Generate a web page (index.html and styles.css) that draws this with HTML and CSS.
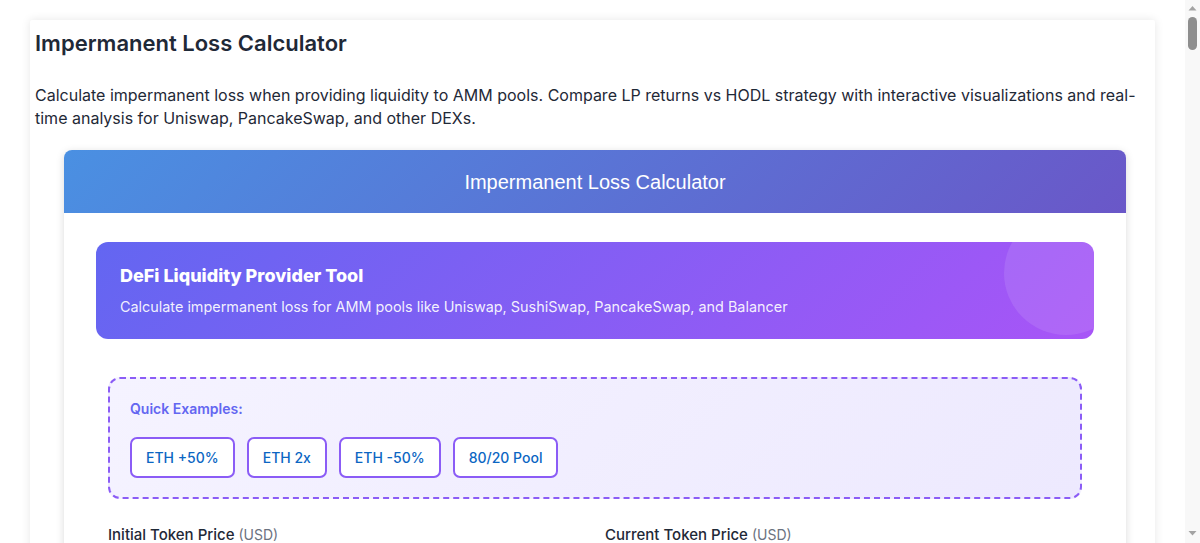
FILE: index.html
```html
<!DOCTYPE html>
<html lang="en">
<head>
<meta charset="utf-8">
<title>Impermanent Loss Calculator</title>
<link rel="stylesheet" href="styles.css">
</head>
<body>
<main class="page">
  <h1 class="page-title">Impermanent Loss Calculator</h1>
  <p class="page-intro">Calculate impermanent loss when providing liquidity to AMM pools. Compare LP returns vs HODL strategy with interactive visualizations and real-time analysis for Uniswap, PancakeSwap, and other DEXs.</p>

  <section class="calc">
    <header class="calc-head">Impermanent Loss Calculator</header>
    <div class="calc-body">
      <div class="banner">
        <h2 class="banner-title">DeFi Liquidity Provider Tool</h2>
        <p class="banner-sub">Calculate impermanent loss for AMM pools like Uniswap, SushiSwap, PancakeSwap, and Balancer</p>
      </div>

      <div class="form">
        <div class="examples">
          <div class="examples-title">Quick Examples:</div>
          <div class="examples-list">
            <button class="ex-btn">ETH +50%</button>
            <button class="ex-btn">ETH 2x</button>
            <button class="ex-btn">ETH -50%</button>
            <button class="ex-btn">80/20 Pool</button>
          </div>
        </div>

        <div class="row">
          <div class="field">
            <label class="label">Initial Token Price <span class="unit">(USD)</span></label>
            <input class="input" type="text" value="2000">
          </div>
          <div class="field">
            <label class="label">Current Token Price <span class="unit">(USD)</span></label>
            <input class="input" type="text" value="3000">
          </div>
        </div>
        <div class="row">
          <div class="field">
            <label class="label">Initial Investment <span class="unit">(USD)</span></label>
            <input class="input" type="text" value="10000">
          </div>
          <div class="field">
            <label class="label">Pool Weight <span class="unit">(%)</span></label>
            <input class="input" type="text" value="50">
          </div>
        </div>
        <button class="calc-btn">Calculate Impermanent Loss</button>
        <div class="results">
          <div class="result"><span class="r-label">Impermanent Loss</span><span class="r-val">-2.02%</span></div>
          <div class="result"><span class="r-label">LP Value</span><span class="r-val">$12,247</span></div>
          <div class="result"><span class="r-label">HODL Value</span><span class="r-val">$12,500</span></div>
        </div>
      </div>
    </div>
  </section>
</main>
<div class="scrollbar" aria-hidden="true">
  <svg width="15" height="543" viewBox="0 0 15 543">
    <rect x="0" y="0" width="15" height="543" fill="#f8f8f8"/>
    <polygon points="3.5,10.5 11.5,10.5 7.5,6" fill="#a3a3a3"/>
    <rect x="3" y="17" width="9" height="33" rx="4.5" fill="#8e8e8e"/>
    <polygon points="3.5,531 11.5,531 7.5,535.5" fill="#a3a3a3"/>
  </svg>
</div>
</body>
</html>
```

FILE: styles.css
```css
html, body {
  margin: 0;
  padding: 0;
  background: #ffffff;
}

body {
  font-family: Inter, "Noto Sans", sans-serif;
  color: #1f2937;
}

.page {
  width: 1115px;
  margin: 20px 0 0 30px;
  padding: 1px 5px 40px;
  background: #ffffff;
  border-radius: 2px;
  box-shadow: 0 0 10px rgba(0, 0, 0, 0.1);
  min-height: 8600px;
}

.page-title {
  margin: 7px 0 0;
  font-size: 22px;
  line-height: 30px;
  font-weight: 600;
  color: #1f2937;
}

.page-intro {
  margin: 26px 0 20px;
  font-size: 16px;
  line-height: 23px;
}

.calc {
  width: 1062px;
  margin: 0 0 0 29px;
  border-radius: 8px;
  background: #ffffff;
  box-shadow: 0 2px 8px rgba(0, 0, 0, 0.15);
  overflow: hidden;
}

.calc-head {
  height: 63px;
  display: flex;
  align-items: center;
  justify-content: center;
  padding-top: 1px;
  box-sizing: border-box;
  background: linear-gradient(135deg, #4a90e2 0%, #6a57c8 100%);
  color: #ffffff;
  font-family: "Liberation Sans", Arial, sans-serif;
  font-size: 20px;
}

.calc-body {
  padding: 29px 32px 40px;
}

.banner {
  position: relative;
  overflow: hidden;
  padding: 23px 24px 22px;
  border-radius: 12px;
  background: linear-gradient(135deg, #6366f1 0%, #a855f7 100%);
  color: #ffffff;
}

.banner::after {
  content: "";
  position: absolute;
  width: 124px;
  height: 124px;
  right: -34px;
  top: -31px;
  border-radius: 50%;
  background: rgba(255, 255, 255, 0.1);
}

.banner-title {
  margin: 0;
  font-size: 18px;
  line-height: 22px;
  font-weight: 800;
  letter-spacing: 0;
}

.banner-sub {
  margin: 10px 0 0;
  font-size: 14.4px;
  line-height: 20px;
  color: rgba(255, 255, 255, 0.92);
}

.form {
  padding: 38px 12px 0;
}

.examples {
  border: 2px dashed #8b5cf6;
  border-radius: 12px;
  padding: 20px 20px 19px;
  background: linear-gradient(135deg, #f5f3ff 0%, #ede9fe 100%);
}

.examples-title {
  font-size: 14px;
  line-height: 20px;
  font-weight: 600;
  color: #6366f1;
  margin-bottom: 18px;
}

.examples-list {
  display: flex;
  gap: 12px;
}

.ex-btn {
  font-family: Inter, sans-serif;
  font-size: 14px;
  line-height: 17px;
  font-weight: 500;
  color: #0b66c3;
  background: #ffffff;
  border: 2px solid #8b5cf6;
  border-radius: 7px;
  padding: 10px 14px;
}

.row {
  display: grid;
  grid-template-columns: 1fr 1fr;
  gap: 20px;
  margin-top: 26px;
}

.field {
  display: flex;
  flex-direction: column;
  gap: 8px;
}

.label {
  font-size: 15px;
  line-height: 20px;
  font-weight: 500;
  color: #1f2937;
}

.unit {
  font-size: 14px;
  font-weight: 400;
  color: #6b7280;
}

.input {
  font-family: Inter, sans-serif;
  font-size: 15px;
  padding: 10px 12px;
  border: 2px solid #e5e7eb;
  border-radius: 8px;
}

.calc-btn {
  margin-top: 26px;
  width: 100%;
  padding: 14px;
  border: none;
  border-radius: 8px;
  background: linear-gradient(135deg, #6366f1, #a855f7);
  color: #ffffff;
  font-family: Inter, sans-serif;
  font-size: 16px;
  font-weight: 600;
}

.results {
  margin-top: 26px;
  display: grid;
  grid-template-columns: repeat(3, 1fr);
  gap: 16px;
}

.result {
  display: flex;
  flex-direction: column;
  gap: 6px;
  padding: 16px;
  border-radius: 10px;
  background: #f9fafb;
  border: 1px solid #e5e7eb;
}

.r-label {
  font-size: 13px;
  color: #6b7280;
}

.r-val {
  font-size: 20px;
  font-weight: 700;
}

.scrollbar {
  position: fixed;
  top: 0;
  right: 0;
  width: 15px;
  height: 543px;
}

.scrollbar svg {
  display: block;
}
```
